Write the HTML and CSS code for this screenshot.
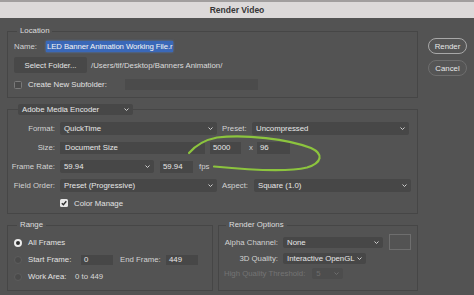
FILE: index.html
```html
<!DOCTYPE html>
<html lang="en">
  <head>
    <meta charset="UTF-8" />
    <title>Render Video</title>
    <link rel="stylesheet" href="styles.css">
  </head>
  <body>
    <div class="window">
      <div class="titlebar">Render Video</div>
      <div class="content">
        <div class="main">
          <fieldset class="group location">
            <legend>Location</legend>
            <div class="row name-row">
              <span class="label">Name:</span>
              <span class="name-value">LED Banner Animation Working File.r</span>
            </div>
            <div class="row folder-row">
              <button class="folder-btn">Select Folder...</button>
              <span class="path">/Users/tif/Desktop/Banners Animation/</span>
            </div>
            <div class="row sub-row">
              <span class="check"></span>
              <span class="check-label sub-label">Create New Subfolder:</span>
              <span class="field subfolder"></span>
            </div>
          </fieldset>

          <fieldset class="group encoder">
            <legend>
              <div class="select encoder-select">
                <span>Adobe Media Encoder</span>
                <svg class="chev" viewBox="0 0 5 3" width="5" height="3"><path d="M0.5 0.5 L2.5 2.5 L4.5 0.5" /></svg>
              </div>
            </legend>
            <div class="row enc-row">
              <span class="enc-label">Format:</span>
              <div class="select w157">
                <span>QuickTime</span>
                <svg class="chev" viewBox="0 0 5 3" width="5" height="3"><path d="M0.5 0.5 L2.5 2.5 L4.5 0.5" /></svg>
              </div>
              <span class="side-label preset-label">Preset:</span>
              <div class="select w157">
                <span>Uncompressed</span>
                <svg class="chev" viewBox="0 0 5 3" width="5" height="3"><path d="M0.5 0.5 L2.5 2.5 L4.5 0.5" /></svg>
              </div>
            </div>
            <div class="row enc-row">
              <span class="enc-label">Size:</span>
              <span class="field size-field">Document Size</span>
              <span class="field width-field">5000</span>
              <span class="times">x</span>
              <span class="field height-field">96</span>
            </div>
            <div class="row enc-row">
              <span class="enc-label">Frame Rate:</span>
              <div class="select w94">
                <span>59.94</span>
                <svg class="chev" viewBox="0 0 5 3" width="5" height="3"><path d="M0.5 0.5 L2.5 2.5 L4.5 0.5" /></svg>
              </div>
              <span class="field fps-field">59.94</span>
              <span class="fps">fps</span>
            </div>
            <div class="row enc-row">
              <span class="enc-label">Field Order:</span>
              <div class="select w157">
                <span>Preset (Progressive)</span>
                <svg class="chev" viewBox="0 0 5 3" width="5" height="3"><path d="M0.5 0.5 L2.5 2.5 L4.5 0.5" /></svg>
              </div>
              <span class="side-label aspect-label">Aspect:</span>
              <div class="select w157">
                <span>Square (1.0)</span>
                <svg class="chev" viewBox="0 0 5 3" width="5" height="3"><path d="M0.5 0.5 L2.5 2.5 L4.5 0.5" /></svg>
              </div>
            </div>
            <div class="row color-row">
              <span class="check checked">
                <svg viewBox="0 0 8 8" width="8" height="8"><path d="M1.8 4.2 L3.4 5.8 L6.3 2.3" /></svg>
              </span>
              <span class="check-label">Color Manage</span>
            </div>
          </fieldset>

          <div class="bottom-groups">
            <fieldset class="group range">
              <legend>Range</legend>
              <div class="row range-row first">
                <span class="radio selected"></span>
                <span class="radio-label">All Frames</span>
              </div>
              <div class="row range-row">
                <span class="radio"></span>
                <span class="radio-label start-label">Start Frame:</span>
                <span class="field frame-field">0</span>
                <span class="end-label">End Frame:</span>
                <span class="field frame-field">449</span>
              </div>
              <div class="row range-row">
                <span class="radio"></span>
                <span class="radio-label work-label">Work Area:</span>
                <span>0 to 449</span>
              </div>
            </fieldset>

            <fieldset class="group options">
              <legend>Render Options</legend>
              <div class="row alpha-row">
                <span class="opt-label">Alpha Channel:</span>
                <div class="select alpha-select">
                  <span>None</span>
                  <svg class="chev" viewBox="0 0 5 3" width="5" height="3"><path d="M0.5 0.5 L2.5 2.5 L4.5 0.5" /></svg>
                </div>
                <span class="swatch"></span>
              </div>
              <div class="row quality-row">
                <span class="opt-label">3D Quality:</span>
                <div class="select quality-select">
                  <span>Interactive OpenGL</span>
                  <svg class="chev" viewBox="0 0 5 3" width="5" height="3"><path d="M0.5 0.5 L2.5 2.5 L4.5 0.5" /></svg>
                </div>
              </div>
              <div class="row threshold-row">
                <span class="disabled">High Quality Threshold:</span>
                <div class="select threshold-select">
                  <span>5</span>
                  <svg class="chev" viewBox="0 0 5 3" width="5" height="3"><path d="M0.5 0.5 L2.5 2.5 L4.5 0.5" /></svg>
                </div>
              </div>
            </fieldset>
          </div>
        </div>

        <div class="side">
          <button class="btn default">Render</button>
          <button class="btn">Cancel</button>
        </div>
      </div>

      <!-- hand drawn highlight over the size fields -->
      <svg class="annotation" width="474" height="295" viewBox="0 0 474 295">
        <path d="M189 153 C196 145 204 140 217 137.5 C245 134 288 139 311 148 C324 154 322 163 307 167.5 C288 172 250 170 214 166.5" />
      </svg>
    </div>
  </body>
</html>
```

FILE: styles.css
```css
body {
  margin: 0;
  background-color: #535353;
  font-family: "Liberation Sans", Arial, sans-serif;
  font-size: 7.8px;
  color: #d8d8d8;
}

.window {
  position: relative;
  width: 474px;
  height: 295px;
  overflow: hidden;
  background-color: #535353;
}

.titlebar {
  height: 16px;
  border-top: 2px solid #a19e9e;
  background-color: #dcd9d9;
  color: #363636;
  font-weight: bold;
  font-size: 8.5px;
  line-height: 16px;
  text-align: center;
}

.content {
  display: flex;
  gap: 10px;
  padding: 8px 0 0 7px;
}

.main {
  width: 411px;
}

.side {
  width: 39px;
  padding-top: 12px;
  display: flex;
  flex-direction: column;
  gap: 6px;
}

/* group boxes */
.group {
  box-sizing: border-box;
  margin: 0;
  padding: 0;
  min-width: 0;
  border: 1px solid #464646;
}

.group legend {
  padding: 0 3px;
  line-height: 10px;
  color: #dedede;
}

.row {
  display: flex;
  align-items: center;
}

/* location */
.location {
  padding: 5px 0 7px 6px;
}

.location legend {
  margin-left: 3px;
}

.name-row {
  height: 11px;
}

.label {
  color: #d2d2d2;
}

.name-value {
  margin-left: 9px;
  padding: 0 1px;
  line-height: 11px;
  letter-spacing: -0.1px;
  background-color: #3a68b8;
  color: #f4f4f4;
  box-shadow: 0 0 2px #4d7ccc;
}

.folder-row {
  height: 16px;
  margin-top: 5px;
}

.folder-btn {
  width: 73px;
  height: 16px;
  padding: 0;
  border: none;
  border-radius: 2px;
  background-color: #484848;
  color: #e6e6e6;
  font: inherit;
}

.path {
  margin-left: 4px;
  color: #dcdcdc;
}

.sub-row {
  height: 11px;
  margin-top: 6px;
}

.sub-label {
  width: 97px;
}

.field {
  box-sizing: border-box;
  height: 11px;
  line-height: 11px;
  padding-left: 3px;
  background-color: #474747;
  color: #e8e8e8;
}

.subfolder {
  width: 133px;
  background-color: #4b4b4b;
}

/* checkboxes and radios */
.check {
  box-sizing: border-box;
  width: 8px;
  height: 8px;
  border: 1px solid #7a7a7a;
  border-radius: 1.5px;
  background-color: #4a4a4a;
}

.check.checked {
  border: none;
  background-color: #e8e8e8;
}

.check svg {
  display: block;
}

.check svg path {
  fill: none;
  stroke: #2f2f2f;
  stroke-width: 1.4;
}

.check-label {
  margin-left: 6px;
  color: #e2e2e2;
}

.radio {
  box-sizing: border-box;
  width: 8px;
  height: 8px;
  border-radius: 50%;
  border: 1px solid #5d5d5d;
  background-color: #4a4a4a;
}

.radio.selected {
  border: 2.5px solid #ececec;
  background-color: #2e2e2e;
}

.radio-label {
  margin-left: 6px;
  color: #e2e2e2;
}

/* selects */
.select {
  box-sizing: border-box;
  display: flex;
  align-items: center;
  justify-content: space-between;
  height: 13px;
  padding: 0 4px 0 4px;
  border-radius: 2px;
  background-color: #474747;
  color: #e8e8e8;
  white-space: nowrap;
}

.chev {
  display: block;
  flex-shrink: 0;
}

.chev path {
  fill: none;
  stroke: #cfcfcf;
  stroke-width: 1;
}

/* encoder */
.encoder {
  margin-top: 6px;
  padding: 7px 0 5px 0;
}

.encoder legend {
  margin-left: 10px;
  padding: 0;
}

.encoder-select {
  width: 115px;
  height: 11px;
}

.enc-row {
  height: 13px;
  margin-bottom: 6px;
}

.enc-label {
  width: 47px;
  margin-right: 5px;
  text-align: right;
  color: #d2d2d2;
}

.w157 {
  width: 157px;
}

.w94 {
  width: 94px;
}

.side-label {
  color: #d2d2d2;
}

.preset-label {
  margin-left: 5px;
  width: 30px;
}

.aspect-label {
  margin-left: 5px;
  width: 32px;
}

.size-field {
  width: 145px;
  height: 12px;
  line-height: 12px;
  padding-left: 5px;
}

.width-field {
  width: 31px;
  height: 12px;
  line-height: 12px;
  margin-left: 5px;
}

.times {
  margin-left: 8px;
  width: 8px;
  color: #d2d2d2;
}

.height-field {
  width: 33px;
  height: 12px;
  line-height: 12px;
}

.fps-field {
  width: 33px;
  height: 12px;
  line-height: 12px;
  margin-left: 6px;
}

.fps {
  margin-left: 6px;
  color: #d2d2d2;
}

.color-row {
  height: 10px;
  padding-left: 52px;
}

/* bottom groups */
.bottom-groups {
  display: flex;
  gap: 5px;
  margin-top: 6px;
}

.range {
  width: 206px;
  padding: 7px 0 8px 6px;
}

.range legend {
  margin-left: 3px;
}

.range-row {
  height: 11px;
  margin-top: 6px;
}

.range-row.first {
  margin-top: 0;
}

.start-label {
  width: 53px;
}

.work-label {
  width: 47px;
}

.frame-field {
  width: 32px;
  height: 10px;
  line-height: 10px;
}

.end-label {
  width: 46px;
  margin-left: 7px;
  color: #d2d2d2;
}

.options {
  flex: 1;
  padding: 4px 0 6px 0;
}

.options legend {
  margin-left: 7px;
}

.opt-label {
  width: 59px;
  margin-right: 5px;
  text-align: right;
  color: #d2d2d2;
}

.alpha-row {
  height: 16px;
}

.alpha-select {
  width: 100px;
  height: 11px;
}

.swatch {
  box-sizing: border-box;
  width: 22px;
  height: 16px;
  margin-left: 6px;
  border: 1px solid #6e6e6e;
}

.quality-row {
  height: 11px;
  margin-top: 3px;
}

.quality-select {
  width: 83px;
  height: 11px;
}

.threshold-row {
  height: 11px;
  margin-top: 4px;
  padding-left: 5px;
}

.disabled {
  color: #747474;
}

.threshold-select {
  width: 31px;
  height: 11px;
  margin-left: 7px;
  background-color: #4d4d4d;
  color: #6e6e6e;
}

.threshold-select .chev path {
  stroke: #6e6e6e;
}

/* right column buttons */
.btn {
  height: 16px;
  padding: 0;
  border: 1px solid #6e6e6e;
  border-radius: 8px;
  background-color: #555555;
  color: #e8e8e8;
  font: inherit;
}

.btn.default {
  border-color: #a8a8a8;
}

.annotation {
  position: absolute;
  top: 0;
  left: 0;
  pointer-events: none;
}

.annotation path {
  fill: none;
  stroke: #8cc43e;
  stroke-width: 2.2;
  stroke-linecap: round;
}
```
